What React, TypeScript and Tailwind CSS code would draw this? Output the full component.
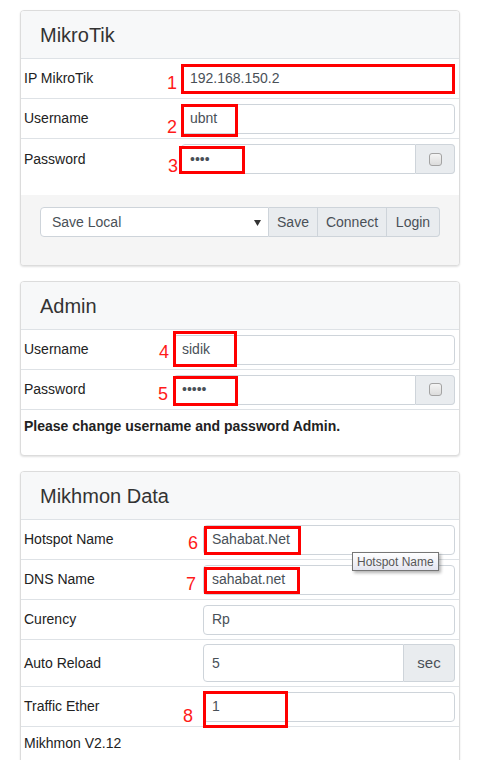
import type { ReactNode } from 'react';

type Mark = { n: string; box: string; num: string };

function Annot({ mark }: { mark?: Mark }) {
  if (!mark) return null;
  return (
    <>
      <span className={`absolute text-[18px] leading-[20px] text-[#ff1a1a] ${mark.num}`}>{mark.n}</span>
      <span className={`absolute border-[3px] border-[#ff0000] ${mark.box}`} />
    </>
  );
}

function Row({
  label,
  labelW,
  children,
  mark,
  last,
  tall,
  extra,
}: {
  label: string;
  labelW: string;
  children: ReactNode;
  mark?: Mark;
  last?: boolean;
  tall?: boolean;
  extra?: ReactNode;
}) {
  return (
    <div
      className={`relative flex items-center ${tall ? 'h-[47px]' : 'h-[40px]'} ${
        last ? '' : 'border-b border-[#dee2e6]'
      }`}
    >
      <div className={`${labelW} shrink-0 pl-[3px] text-[14px] text-[#222]`}>{label}</div>
      <div className="flex-1 pr-[4px]">{children}</div>
      <Annot mark={mark} />
      {extra}
    </div>
  );
}

function Field({ value, h = 'h-[30px]' }: { value: string; h?: string }) {
  return (
    <div
      className={`${h} flex items-center rounded-[4px] border border-[#ced4da] bg-white px-[8px] text-[14px] text-[#495057]`}
    >
      {value}
    </div>
  );
}

function Checkbox() {
  return (
    <span className="block h-[13px] w-[13px] rounded-[3px] border border-[#a3a3a3] bg-gradient-to-b from-[#f4f4f4] to-[#dcdcdc]" />
  );
}

function PassField({ value }: { value: string }) {
  return (
    <div className="flex h-[30px]">
      <div className="flex flex-1 items-center rounded-l-[4px] border border-[#ced4da] bg-white px-[8px] text-[14px] text-[#495057]">
        {value}
      </div>
      <div className="flex w-[39px] items-center justify-center rounded-r-[4px] border border-l-0 border-[#ced4da] bg-[#e9ecef]">
        <Checkbox />
      </div>
    </div>
  );
}

function Card({ title, children }: { title: string; children: ReactNode }) {
  return (
    <div className="mx-[20px] overflow-hidden rounded-[4px] border border-[#dcdcdc] bg-white shadow-[0_1px_2px_rgba(0,0,0,0.12)]">
      <div className="flex h-[48px] items-center border-b border-[#dee2e6] bg-[#f7f8f9] pl-[19px] text-[20px] text-[#333]">
        {title}
      </div>
      {children}
    </div>
  );
}

export default function App() {
  return (
    <div className="h-[760px] overflow-hidden bg-white pt-[10px] font-['Liberation_Sans',Arial,sans-serif]">
      <Card title="MikroTik">
        <Row
          label="IP MikroTik"
          labelW="w-[160px]"
          mark={{ n: '1', num: 'left-[146px] top-[14px]', box: 'left-[160px] top-[5px] w-[274px] h-[30px]' }}
        >
          <Field value="192.168.150.2" />
        </Row>
        <Row
          label="Username"
          labelW="w-[160px]"
          mark={{ n: '2', num: 'left-[146px] top-[18px]', box: 'left-[160px] top-[5px] w-[57px] h-[33px]' }}
        >
          <Field value="ubnt" />
        </Row>
        <Row
          label="Password"
          labelW="w-[160px]"
          last
          mark={{ n: '3', num: 'left-[147px] top-[17px]', box: 'left-[158px] top-[7px] w-[66px] h-[28px]' }}
        >
          <PassField value="••••" />
        </Row>
        <div className="mt-[16px] bg-[#f5f5f5] px-[19px] pb-[28px] pt-[12px]">
          <div className="flex h-[30px] text-[14px] text-[#495057]">
            <div className="relative flex flex-1 items-center rounded-l-[4px] border border-[#ced4da] bg-white pl-[11px]">
              Save Local
              <svg className="absolute right-[7px] top-[12px]" width="7" height="6" viewBox="0 0 7 6">
                <path d="M0 0h7L3.5 6z" fill="#333" />
              </svg>
            </div>
            <div className="flex w-[49px] items-center justify-center border border-l-0 border-[#ced4da] bg-[#e9ecef]">
              Save
            </div>
            <div className="flex w-[69px] items-center justify-center border border-l-0 border-[#ced4da] bg-[#e9ecef]">
              Connect
            </div>
            <div className="flex w-[53px] items-center justify-center rounded-r-[4px] border border-l-0 border-[#ced4da] bg-[#e9ecef]">
              Login
            </div>
          </div>
        </div>
      </Card>

      <div className="h-[15px]" />

      <Card title="Admin">
        <Row
          label="Username"
          labelW="w-[152px]"
          mark={{ n: '4', num: 'left-[138px] top-[12px]', box: 'left-[152px] top-[1px] w-[64px] h-[36px]' }}
        >
          <Field value="sidik" />
        </Row>
        <Row
          label="Password"
          labelW="w-[152px]"
          mark={{ n: '5', num: 'left-[137px] top-[14px]', box: 'left-[152px] top-[6px] w-[65px] h-[30px]' }}
        >
          <PassField value="•••••" />
        </Row>
        <div className="h-[45px] pl-[3px] pt-[6px] text-[14px] font-bold leading-[20px] text-[#222]">
          Please change username and password Admin.
        </div>
      </Card>

      <div className="h-[15px]" />

      <Card title="Mikhmon Data">
        <Row
          label="Hotspot Name"
          labelW="w-[182px]"
          mark={{ n: '6', num: 'left-[167px] top-[13px]', box: 'left-[183px] top-[6px] w-[97px] h-[29px]' }}
          extra={
            <span className="absolute left-[331px] top-[32px] z-10 flex h-[19px] items-center border border-[#767676] bg-gradient-to-b from-[#ffffff] to-[#e4e5f0] px-[4px] text-[12px] text-[#575757] shadow-[2px_2px_3px_rgba(0,0,0,0.3)]">
              Hotspot Name
            </span>
          }
        >
          <Field value="Sahabat.Net" />
        </Row>
        <Row
          label="DNS Name"
          labelW="w-[182px]"
          mark={{ n: '7', num: 'left-[165px] top-[14px]', box: 'left-[183px] top-[7px] w-[96px] h-[27px]' }}
        >
          <Field value="sahabat.net" />
        </Row>
        <Row label="Curency" labelW="w-[182px]">
          <Field value="Rp" />
        </Row>
        <Row label="Auto Reload" labelW="w-[182px]" tall>
          <div className="flex h-[38px]">
            <div className="flex flex-1 items-center rounded-l-[4px] border border-[#ced4da] bg-white px-[8px] text-[14px] text-[#495057]">
              5
            </div>
            <div className="flex w-[51px] items-center justify-center rounded-r-[4px] border border-l-0 border-[#ced4da] bg-[#e9ecef] text-[15px] text-[#495057]">
              sec
            </div>
          </div>
        </Row>
        <Row
          label="Traffic Ether"
          labelW="w-[182px]"
          mark={{ n: '8', num: 'left-[162px] top-[19px]', box: 'left-[182px] top-[4px] w-[85px] h-[37px]' }}
        >
          <Field value="1" />
        </Row>
        <div className="h-[80px] pl-[3px] pt-[6px] text-[14px] leading-[20px] text-[#222]">Mikhmon V2.12</div>
      </Card>
    </div>
  );
}
